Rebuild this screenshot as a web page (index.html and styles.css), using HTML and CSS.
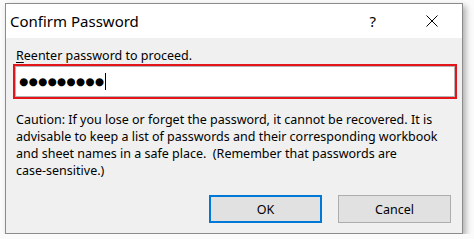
FILE: index.html
```html
<!DOCTYPE html>
<html lang="en">
<head>
  <meta charset="UTF-8">
  <title>Confirm Password</title>
  <link rel="stylesheet" href="styles.css">
</head>
<body>
  <div class="dialog">
    <div class="titlebar">
      <span class="title">Confirm Password</span>
      <span class="help">?</span>
      <svg class="close" width="12" height="12" viewBox="0 0 12 12">
        <path d="M0.5 0.5 L11.5 11.5 M11.5 0.5 L0.5 11.5" stroke="#000" stroke-width="1" fill="none"/>
      </svg>
    </div>
    <div class="content">
      <div class="label"><u>R</u>eenter password to proceed.</div>
      <div class="highlight">
        <div class="textbox">
          <span class="dots">●●●●●●●●●</span><span class="caret"></span>
        </div>
      </div>
      <p class="caution">Caution: If you lose or forget the password, it cannot be recovered. It is advisable to keep a list of passwords and their corresponding workbook and sheet names in a safe place.&nbsp; (Remember that passwords are <span class="nowrap">case-sensitive.)</span></p>
      <div class="buttons">
        <button class="btn default">OK</button>
        <button class="btn">Cancel</button>
      </div>
    </div>
  </div>
</body>
</html>
```

FILE: styles.css
```css
body {
  margin: 0;
  background: #fbfbfb;
  font-family: 'Noto Sans', 'Open Sans', sans-serif;
  color: #000;
}
.dialog {
  margin: 3px 0 0 5px;
  width: 456px;
  height: 229px;
  border: 1px solid #8c8c8c;
  background: #f0f0f0;
  box-shadow: 3px 3px 6px rgba(0, 0, 0, 0.3);
  display: flex;
  flex-direction: column;
}
.titlebar {
  height: 34px;
  background: #fff;
  display: flex;
  align-items: center;
  padding-left: 4px;
}
.title {
  flex: 1;
  font-size: 15px;
}
.help {
  font-size: 15px;
  margin-right: 50px;
}
.close {
  margin-right: 24px;
}
.content {
  flex: 1;
  padding: 9px 11px 10px 10px;
  display: flex;
  flex-direction: column;
  font-size: 12.5px;
  line-height: 17px;
}
.label u {
  text-decoration-thickness: 1px;
  text-underline-offset: 2px;
}
.highlight {
  margin-left: -3px;
  width: 440px;
  height: 31px;
  border: 2px solid #e4141b;
}
.textbox {
  box-sizing: border-box;
  width: 440px;
  height: 31px;
  border: 1px solid #b5b5b5;
  background: #fff;
  display: flex;
  align-items: center;
  padding-left: 3px;
}
.dots {
  font-family: 'DejaVu Sans', sans-serif;
  font-size: 10.5px;
  letter-spacing: 0.3px;
}
.caret {
  width: 1px;
  height: 17px;
  background: #000;
  margin-left: 1px;
}
.caution {
  margin: 12px 0 0;
  width: 438px;
}
.nowrap {
  white-space: nowrap;
}
.buttons {
  margin-top: auto;
  display: flex;
  justify-content: flex-end;
  gap: 16px;
}
.btn {
  width: 113px;
  height: 28px;
  font-family: inherit;
  font-size: 12.5px;
  background: #e1e1e1;
  border: 1px solid #adadad;
  color: #000;
  padding: 0;
}
.btn.default {
  border: 2px solid #0078d7;
}
```
